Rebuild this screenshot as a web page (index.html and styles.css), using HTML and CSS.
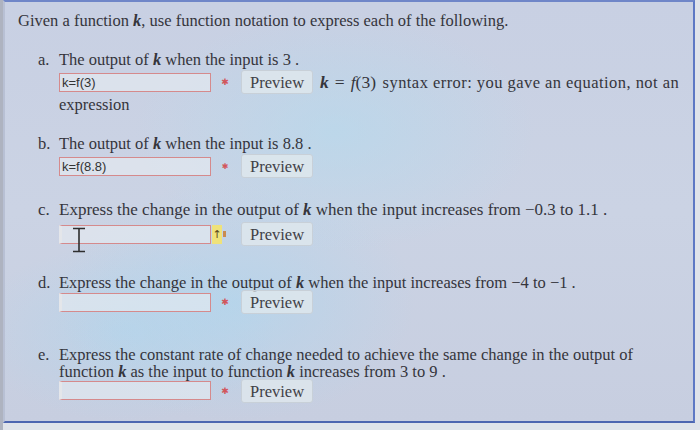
FILE: index.html
```html
<!DOCTYPE html>
<html>
<head>
<meta charset="utf-8">
<link rel="stylesheet" href="styles.css">
</head>
<body>
<div class="screen">
  <div class="panel">
    <p class="intro">Given a function <i class="mk">k</i>, use function notation to express each of the following.</p>
    <ol class="parts">
      <li class="part part-a">
        <div class="q"><span class="lbl">a.</span><span>The output of <i class="mk">k</i> when the input is 3 .</span></div>
        <div class="row">
          <span class="field err">k=f(3)</span>
          <span class="mark"><span class="star">✱</span></span>
          <span class="btn">Preview</span>
          <span class="msg"><span class="math"><i class="mk">k</i><span class="eq">=</span><i>f</i>(3)</span> syntax error: you gave an equation, not an</span>
        </div>
        <div class="cont">expression</div>
      </li>
      <li class="part part-b">
        <div class="q"><span class="lbl">b.</span><span>The output of <i class="mk">k</i> when the input is 8.8 .</span></div>
        <div class="row">
          <span class="field err">k=f(8.8)</span>
          <span class="mark"><span class="star small">✱</span></span>
          <span class="btn">Preview</span>
        </div>
      </li>
      <li class="part part-c">
        <div class="q"><span class="lbl">c.</span><span>Express the change in the output of <i class="mk">k</i> when the input increases from −0.3 to 1.1 .</span></div>
        <div class="row">
          <span class="field empty">
            <svg class="ibeam" width="16" height="26" viewBox="0 0 16 26">
              <path d="M2 1.5 H14 M8 1.5 V24.5 M2 24.5 H14" stroke="#2e2e2e" stroke-width="1.6" fill="none"/>
            </svg>
          </span>
          <span class="mark"><span class="arrow">↑</span><span class="tick"></span></span>
          <span class="btn">Preview</span>
        </div>
      </li>
      <li class="part part-d">
        <div class="q"><span class="lbl">d.</span><span>Express the change in the output of <i class="mk">k</i> when the input increases from −4 to −1 .</span></div>
        <div class="row">
          <span class="field empty"></span>
          <span class="mark"><span class="star">✱</span></span>
          <span class="btn">Preview</span>
        </div>
      </li>
      <li class="part part-e">
        <div class="q"><span class="lbl">e.</span><span>Express the constant rate of change needed to achieve the same change in the output of<br>function <i class="mk">k</i> as the input to function <i class="mk">k</i> increases from 3 to 9 .</span></div>
        <div class="row">
          <span class="field empty"></span>
          <span class="mark"><span class="star">✱</span></span>
          <span class="btn">Preview</span>
        </div>
      </li>
    </ol>
  </div>
</div>
</body>
</html>
```
FILE: styles.css
```css
html, body {
  margin: 0;
  padding: 0;
}
body {
  width: 700px;
  height: 430px;
  overflow: hidden;
  background: #dde1e6;
  font-family: "Liberation Serif", "DejaVu Serif", serif;
  color: #35353c;
}
.screen {
  height: 430px;
  padding: 0 5px 7px 3px;
  box-sizing: border-box;
  background: linear-gradient(90deg, #aeb3c0 0, #aeb3c0 3px, #dfe3ea 3px);
}
.panel {
  height: 423px;
  box-sizing: border-box;
  border-top: 2px solid #6f86c8;
  border-left: 2px solid #b8c0d4;
  border-right: 2px solid #5d78c4;
  border-bottom: 2px solid #4d66b0;
  background:
    radial-gradient(ellipse 180px 120px at 230px 300px, rgba(170, 215, 240, 0.55), rgba(170, 215, 240, 0) 100%),
    radial-gradient(ellipse 200px 120px at 330px 130px, rgba(175, 220, 240, 0.5), rgba(175, 220, 240, 0) 100%),
    radial-gradient(ellipse 150px 90px at 120px 330px, rgba(170, 215, 240, 0.45), rgba(170, 215, 240, 0) 100%),
    linear-gradient(180deg, #c8d0e3 0%, #cbd3e4 50%, #c7cee0 100%);
  padding: 9px 0 0 13px;
}
.intro {
  margin: 0;
  font-size: 16.5px;
  line-height: 20px;
}
.mk {
  font-weight: bold;
  font-style: italic;
}
.parts {
  list-style: none;
  margin: 0;
  padding: 0 0 0 20px;
}
.part-a { margin-top: 19px; }
.part-b { margin-top: 18px; }
.part-c { margin-top: 22px; }
.part-d { margin-top: 26px; }
.part-e { margin-top: 34px; }
.q {
  display: flex;
  font-size: 16.5px;
  line-height: 20px;
}
.part-c .q { font-size: 17px; }
.part-d .q { line-height: 18px; }
.part-e .q { line-height: 17px; }
.lbl {
  width: 21px;
  flex: none;
}
.row {
  display: flex;
  align-items: center;
  height: 24px;
  margin-left: 21px;
}
.part-c .row { height: 28px; }
.part-d .row { height: 20px; }
.part-e .row { height: 19px; margin-top: 1px; }
.field {
  width: 152px;
  height: 19px;
  flex: none;
  box-sizing: border-box;
  border: 1px solid #d58a8c;
  background: rgba(232, 236, 242, 0.6);
  font-family: "Liberation Sans", Arial, sans-serif;
  font-size: 13px;
  line-height: 17px;
  padding-left: 2px;
  color: #333;
}
.mark {
  width: 28px;
  display: flex;
  align-items: center;
  justify-content: center;
  height: 18px;
}
.star {
  color: #d2565b;
  font-size: 9px;
  font-family: "DejaVu Sans", sans-serif;
}
.star.small { font-size: 8px; }
.arrow {
  display: inline-block;
  background: #efe27a;
  width: 10px;
  height: 19px;
  color: #5a4a20;
  font-size: 11px;
  line-height: 19px;
  text-align: center;
  font-family: "DejaVu Sans", sans-serif;
  margin-left: -12px;
}
.tick {
  display: inline-block;
  width: 3px;
  height: 6px;
  background: #c98b50;
  margin-left: 1px;
}
.btn {
  display: inline-block;
  height: 24px;
  line-height: 23px;
  padding: 0 8px;
  margin-left: 2px;
  border: 1px solid #c8d0d8;
  border-radius: 3px;
  background: rgba(226, 234, 238, 0.75);
  font-size: 16.5px;
  color: #3f4046;
  box-sizing: border-box;
}
.msg {
  margin-left: 7px;
  font-size: 16.5px;
  letter-spacing: 0.45px;
  white-space: nowrap;
}
.math {
  font-size: 17.5px;
  letter-spacing: 0;
  margin-right: 2px;
}
.eq {
  margin: 0 6px;
}
.cont {
  margin-left: 21px;
  font-size: 16.5px;
  line-height: 22px;
}
.empty {
  position: relative;
  border-left: 3px solid #e4e6ea;
}
.ibeam {
  position: absolute;
  left: 9px;
  top: 1px;
}
```
